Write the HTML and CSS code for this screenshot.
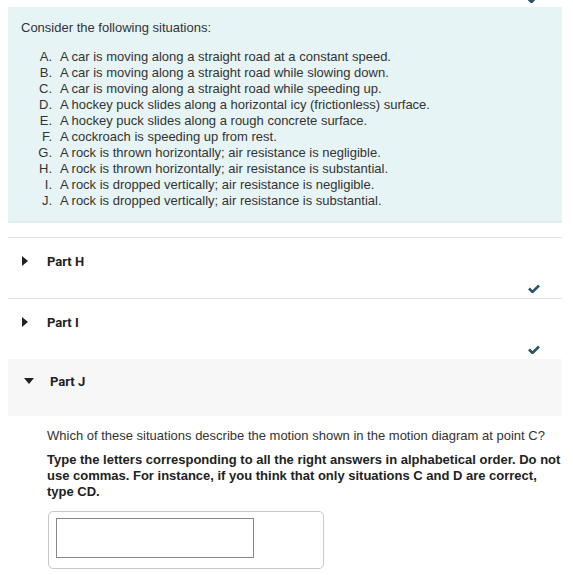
FILE: index.html
```html
<!DOCTYPE html>
<html lang="en">
<head>
  <meta charset="UTF-8" />
  <title>Parts</title>
  <link rel="stylesheet" href="styles.css">
</head>
<body>
  <div class="top-status">
    <svg class="check check-cut" viewBox="0 0 12 9" width="12" height="9"><path d="M1 4.5 L4.5 8 L11 1.5" /></svg>
  </div>

  <!-- Intro -->
  <div class="intro">
    <p class="intro-lead">Consider the following situations:</p>
    <ol class="situations">
      <li>A car is moving along a straight road at a constant speed.</li>
      <li>A car is moving along a straight road while slowing down.</li>
      <li>A car is moving along a straight road while speeding up.</li>
      <li>A hockey puck slides along a horizontal icy (frictionless) surface.</li>
      <li>A hockey puck slides along a rough concrete surface.</li>
      <li>A cockroach is speeding up from rest.</li>
      <li>A rock is thrown horizontally; air resistance is negligible.</li>
      <li>A rock is thrown horizontally; air resistance is substantial.</li>
      <li>A rock is dropped vertically; air resistance is negligible.</li>
      <li>A rock is dropped vertically; air resistance is substantial.</li>
    </ol>
  </div>

  <!-- Parts -->
  <div class="part">
    <div class="part-head"><span class="tri-right"></span><span class="part-title">Part H</span></div>
    <div class="part-status">
      <svg class="check" viewBox="0 0 12 9" width="12" height="9"><path d="M1 4.5 L4.5 8 L11 1.5" /></svg>
    </div>
  </div>

  <div class="part">
    <div class="part-head"><span class="tri-right"></span><span class="part-title">Part I</span></div>
    <div class="part-status">
      <svg class="check" viewBox="0 0 12 9" width="12" height="9"><path d="M1 4.5 L4.5 8 L11 1.5" /></svg>
    </div>
  </div>

  <div class="part part-open">
    <div class="part-head"><span class="tri-down"></span><span class="part-title">Part J</span></div>
  </div>

  <div class="question">
    <p class="q-text">Which of these situations describe the motion shown in the motion diagram at point C?</p>
    <p class="q-hint">Type the letters corresponding to all the right answers in alphabetical order. Do not use commas. For instance, if you think that only situations C and D are correct, type CD.</p>
    <div class="answer-box">
      <input class="answer-input" type="text" />
    </div>
  </div>
</body>
</html>
```

FILE: styles.css
```css
* { box-sizing: border-box; }
body {
  margin: 0;
  font-family: 'Liberation Sans', Arial, sans-serif;
  color: #333;
  background: #fff;
}
p { margin: 0; }

.top-status {
  height: 7px;
  padding-right: 34px;
  display: flex;
  justify-content: flex-end;
  overflow: hidden;
}
.check {
  fill: none;
  stroke: #2b5566;
  stroke-width: 2.6;
}
.check-cut { margin-top: -6px; }

/* intro box */
.intro {
  margin: 0 11px 0 8px;
  background: #e7f4f5;
  border-bottom: 2px solid #e0eef0;
  padding: 13px 13px 12px;
  font-size: 13px;
}
.intro-lead { line-height: 16px; margin-bottom: 13px; }
.situations {
  list-style: none;
  counter-reset: sit;
  margin: 0;
  padding-left: 7px;
  line-height: 16px;
}
.situations li { counter-increment: sit; }
.situations li::before {
  content: counter(sit, upper-alpha) ".";
  display: inline-block;
  width: 24px;
  margin-right: 8px;
  text-align: right;
}

/* parts */
.part {
  margin: 14px 11px 0 8px;
  border-top: 1px solid #e2e2e2;
  height: 61px;
  display: flex;
  flex-direction: column;
}
.part + .part { margin-top: 0; }
.part-head {
  display: flex;
  align-items: center;
  height: 46px;
  padding-left: 14px;
}
.part-title {
  font-family: Roboto, 'Liberation Sans', sans-serif;
  font-weight: bold;
  font-size: 13px;
  color: #222;
}
.tri-right {
  width: 0; height: 0;
  border-top: 5px solid transparent;
  border-bottom: 5px solid transparent;
  border-left: 6px solid #222;
  margin-right: 19px;
}
.part-status {
  display: flex;
  justify-content: flex-end;
  padding-right: 22px;
}
.part-open {
  background: #f7f7f7;
  border-top: none;
  height: 57px;
  margin-top: 0;
}
.part-open .part-head { height: 44px; padding-left: 16px; }
.tri-down {
  width: 0; height: 0;
  border-left: 5px solid transparent;
  border-right: 5px solid transparent;
  border-top: 6px solid #222;
  margin-right: 16px;
}

/* question */
.question {
  padding: 12px 8px 0 47px;
  font-size: 13px;
  line-height: 16px;
}
.q-text { margin-bottom: 8px; }
.q-hint { font-weight: bold; color: #222; margin-bottom: 11px; }
.answer-box {
  width: 276px;
  height: 58px;
  border: 1px solid #c8c8c8;
  border-radius: 5px;
  padding: 6px 0 0 7px;
  margin-left: 1px;
}
.answer-input {
  display: block;
  width: 198px;
  height: 40px;
  border: 1px solid #888;
  margin: 0;
  padding: 0;
}
```
